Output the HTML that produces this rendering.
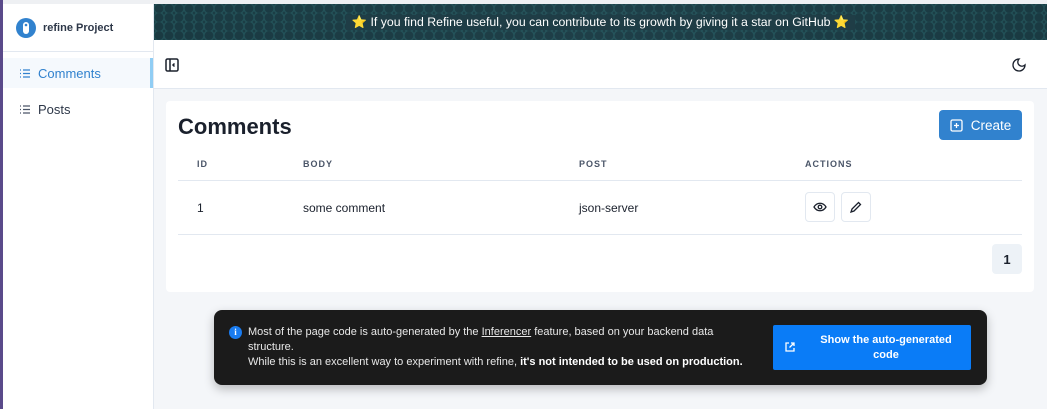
<!DOCTYPE html>
<html><head><meta charset="utf-8"><style>
*{box-sizing:border-box;margin:0;padding:0}
body{width:1047px;height:409px;overflow:hidden;background:#f4f6f9;font-family:"Liberation Sans",sans-serif;position:relative;color:#1a202c}
.purple{position:absolute;left:0;top:0;width:3px;height:409px;background:#5a4a8a}
.topline{position:absolute;left:3px;top:0;width:1044px;height:4px;background:#eef0f3}
.side{position:absolute;left:3px;top:4px;width:151px;height:405px;background:#fff;border-right:1px solid #e2e8f0}
.logo{height:48px;border-bottom:1px solid #e2e8f0;display:flex;align-items:center;padding-left:13px;font-weight:bold;font-size:11px;color:#2d3748}
.logo svg{margin-right:7px}
.item{height:30px;display:flex;align-items:center;padding-left:17px;font-size:13px;color:#2d3748;margin-top:6px}
.item svg{margin-right:8px}
.item.active{background:#f5f9fd;color:#3182ce;border-right:3px solid #90cdf4;margin-top:6px}
.banner{position:absolute;left:154px;top:4px;width:893px;height:36px;background:linear-gradient(90deg,#1a3a42,#1f3f48 50%,#1a3a42);color:#fff;font-size:12.3px;display:flex;align-items:center;justify-content:center;overflow:hidden}
.banner:before{content:"";position:absolute;inset:0;background-image:radial-gradient(circle,transparent 4px,rgba(60,160,160,.35) 5px,transparent 6px);background-size:10px 9px;opacity:.8}
.banner span{position:relative;background:#1f3d46;padding:0 6px}
.header{position:absolute;left:154px;top:40px;width:893px;height:49px;background:#fff;border-bottom:1px solid #e2e8f0}
.card{position:absolute;left:166px;top:101px;width:868px;height:191px;background:#fff;border-radius:4px}
h1{position:absolute;left:12px;top:13px;font-size:22px;font-weight:bold;color:#1a202c}
.create{position:absolute;left:773px;top:9px;width:83px;height:30px;background:#3182ce;border-radius:4px;color:#fff;font-size:13.5px;display:flex;align-items:center;justify-content:center;gap:8px}
.th{position:absolute;top:58px;font-size:9px;font-weight:bold;letter-spacing:1px;color:#4a5568}
.line{position:absolute;left:12px;width:844px;height:1px;background:#e2e8f0}
.td{position:absolute;top:100px;font-size:12px;color:#1a202c}
.ib{position:absolute;top:91px;width:30px;height:30px;border:1px solid #e2e8f0;border-radius:4px;display:flex;align-items:center;justify-content:center}
.pg{position:absolute;left:826px;top:143px;width:30px;height:30px;background:#edf2f7;border-radius:4px;font-size:13px;font-weight:bold;display:flex;align-items:center;justify-content:center}
.toast{position:absolute;left:214px;top:310px;width:773px;height:75px;background:#1b1b1b;border-radius:8px;box-shadow:0 4px 10px rgba(0,0,0,.25);color:#e8e8e8;font-size:11px;line-height:15px}
.toast .txt{position:absolute;left:34px;top:15px;width:500px}
.toast .ic{position:absolute;left:15px;top:16px;width:13px;height:13px;border-radius:50%;background:#1a7cf0;color:#fff;font-size:9px;font-weight:bold;text-align:center;line-height:13px;font-family:"Liberation Serif",serif}
.btn{position:absolute;left:559px;top:15px;width:198px;height:45px;background:#0a7cf7;border-radius:2px;color:#fff;font-weight:bold;font-size:11px;text-align:center;line-height:15px;padding:8px 0 0 28px}
.btn svg{position:absolute;left:12px;top:17px}
</style></head><body>
<div class="purple"></div><div class="topline"></div>
<div class="side">
 <div class="logo"><svg width="20" height="20" viewBox="0 0 20 20"><circle cx="10" cy="10" r="10" fill="#3182ce"/><rect x="7" y="4" width="6" height="12" rx="3" fill="#fff"/><circle cx="10" cy="7" r="1.3" fill="#3182ce"/></svg>refine Project</div>
 <div class="item active"><svg width="10" height="9" viewBox="0 0 10 9" stroke="#3182ce" stroke-width="1.2"><path d="M0 1h1M3 1h7M0 4.5h1M3 4.5h7M0 8h1M3 8h7"/></svg>Comments</div>
 <div class="item"><svg width="10" height="9" viewBox="0 0 10 9" stroke="#4a5568" stroke-width="1.2"><path d="M0 1h1M3 1h7M0 4.5h1M3 4.5h7M0 8h1M3 8h7"/></svg>Posts</div>
</div>
<div class="banner"><span>⭐ If you find Refine useful, you can contribute to its growth by giving it a star on GitHub ⭐</span></div>
<div class="header">
 <svg style="position:absolute;left:11px;top:18px" width="14" height="14" viewBox="0 0 14 14" fill="none" stroke="#1a202c" stroke-width="1.5"><rect x="1" y="1" width="12" height="12" rx="1.5"/><path d="M5 1v12M9.5 5.5L8 7l1.5 1.5"/></svg>
 <svg style="position:absolute;left:857px;top:17px" width="16" height="16" viewBox="0 0 24 24" fill="none" stroke="#1a202c" stroke-width="2"><path d="M12 3a6 6 0 0 0 9 9 9 9 0 1 1-9-9z"/></svg>
</div>
<div class="card">
 <h1>Comments</h1>
 <div class="create"><svg width="13" height="13" viewBox="0 0 13 13" fill="none" stroke="#fff" stroke-width="1.3"><rect x="1" y="1" width="11" height="11" rx="1.5"/><path d="M6.5 4v5M4 6.5h5"/></svg>Create</div>
 <div class="th" style="left:31px">ID</div>
 <div class="th" style="left:137px">BODY</div>
 <div class="th" style="left:413px">POST</div>
 <div class="th" style="left:639px">ACTIONS</div>
 <div class="line" style="top:79px"></div>
 <div class="td" style="left:31px">1</div>
 <div class="td" style="left:137px">some comment</div>
 <div class="td" style="left:413px">json-server</div>
 <div class="ib" style="left:639px"><svg width="14" height="10" viewBox="0 0 14 10" fill="none" stroke="#1a202c" stroke-width="1.3"><path d="M1 5c3-5 9-5 12 0c-3 5-9 5-12 0z"/><circle cx="7" cy="5" r="1.8"/></svg></div>
 <div class="ib" style="left:675px"><svg width="12" height="12" viewBox="0 0 12 12" fill="none" stroke="#1a202c" stroke-width="1.3"><path d="M8.5 1.5l2 2L4 10l-3 1 1-3z"/></svg></div>
 <div class="line" style="top:133px"></div>
 <div class="pg">1</div>
</div>
<div class="toast">
 <div class="ic">i</div>
 <div class="txt">Most of the page code is auto-generated by the <u>Inferencer</u> feature, based on your backend data<br>structure.<br>While this is an excellent way to experiment with refine, <b style="color:#fff">it's not intended to be used on production.</b></div>
 <div class="btn"><svg width="10" height="10" viewBox="0 0 10 10" fill="none" stroke="#fff" stroke-width="1.3"><path d="M4 1H1v8h8V6M6 1h3v3M9 1L4.5 5.5"/></svg>Show the auto-generated<br>code</div>
</div>
</body></html>
